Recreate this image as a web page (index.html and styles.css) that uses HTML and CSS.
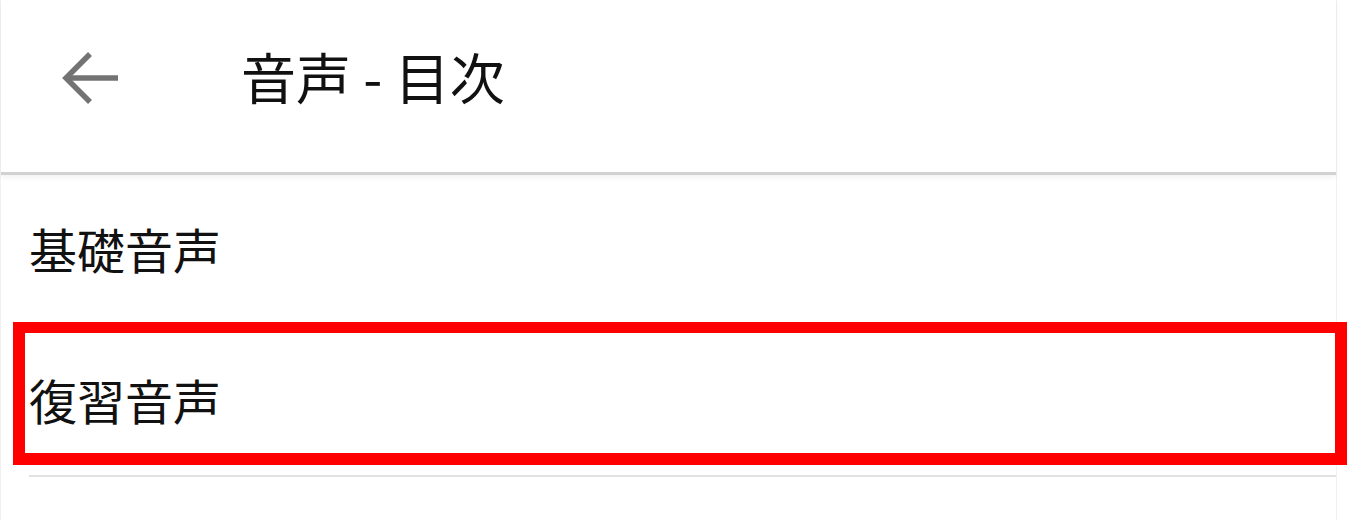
FILE: index.html
```html
<!DOCTYPE html>
<html lang="ja">
<head>
<meta charset="utf-8">
<title>音声 - 目次</title>
<link rel="stylesheet" href="styles.css">
</head>
<body>
<div class="page">
  <header class="appbar">
    <svg class="back" width="64" height="64" viewBox="0 0 64 64" aria-hidden="true">
      <path d="M34 8 L10 32 L34 56" fill="none" stroke="#737373" stroke-width="5.5" stroke-linejoin="miter"/>
      <path d="M10 32 H62" fill="none" stroke="#737373" stroke-width="5.5"/>
    </svg>
    <h1 class="title">音声 - 目次</h1>
  </header>
  <ul class="list">
    <li class="item">基礎音声</li>
    <li class="item">復習音声</li>
  </ul>
</div>
<div class="highlight"></div>
</body>
</html>
```
FILE: styles.css
```css
html, body {
  margin: 0;
  padding: 0;
  background: #ffffff;
}
body {
  font-family: "Noto Sans CJK JP", "Noto Sans", sans-serif;
  color: #111111;
  position: relative;
  height: 520px;
  overflow: hidden;
}
.page {
  width: 1337px;
  height: 520px;
  box-sizing: border-box;
  border-left: 1px solid #f1f1f1;
  border-right: 1px solid #f1f1f1;
}
.appbar {
  height: 175px;
  box-sizing: border-box;
  padding-bottom: 16px;
  display: flex;
  align-items: center;
  border-bottom: 3px solid #d2d2d2;
  box-shadow: 0 3px 5px rgba(0, 0, 0, 0.05);
  position: relative;
}
.back {
  margin-left: 55px;
  flex: none;
}
.title {
  margin: 0 0 0 121px;
  padding-bottom: 6px;
  font-size: 55px;
  font-weight: 400;
  line-height: 1;
  color: #111111;
}
.list {
  list-style: none;
  margin: 0;
  padding: 0;
}
.item {
  margin-left: 28px;
  height: 151px;
  box-sizing: border-box;
  padding-bottom: 4px;
  border-bottom: 2px solid #e2e2e2;
  display: flex;
  align-items: center;
  font-size: 48px;
  line-height: 1;
}
.highlight {
  position: absolute;
  left: 13px;
  top: 322px;
  width: 1334px;
  height: 143px;
  box-sizing: border-box;
  border: 12px solid #ff0000;
  border-top-width: 11px;
}
```
